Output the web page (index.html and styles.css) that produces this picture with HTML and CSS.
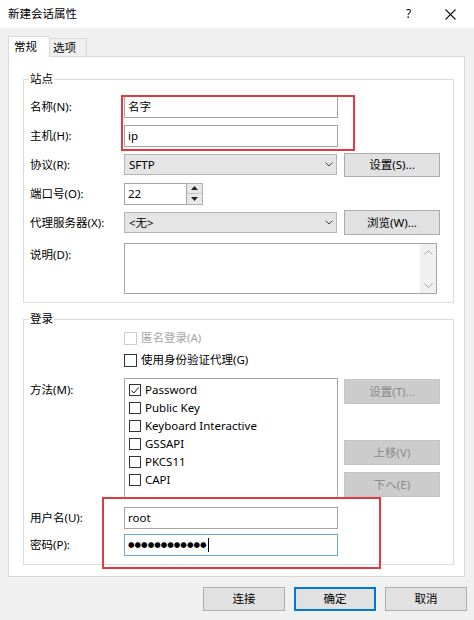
FILE: index.html
```html
<!DOCTYPE html>
<html lang="zh-CN">
<head>
<meta charset="utf-8">
<title>新建会话属性</title>
<link rel="stylesheet" href="styles.css">
</head>
<body>
<div class="window">
  <div class="titlebar">
    <span class="title">新建会话属性</span>
    <span class="help">?</span>
    <svg class="close" width="11" height="11" viewBox="0 0 11 11"><path d="M0.5 0.5 L10.5 10.5 M10.5 0.5 L0.5 10.5" stroke="#111" stroke-width="1.1" fill="none"/></svg>
  </div>

  <div class="tabs">
    <div class="tab active">常规</div>
    <div class="tab">选项</div>
  </div>

  <div class="panel">
    <div class="group site">
      <span class="legend">站点</span>
      <div class="row">
        <span class="label">名称(N):</span>
        <div class="input w-full">名字</div>
      </div>
      <div class="row">
        <span class="label">主机(H):</span>
        <div class="input w-full">ip</div>
      </div>
      <div class="row">
        <span class="label">协议(R):</span>
        <div class="select"><span>SFTP</span><svg width="8" height="5" viewBox="0 0 8 5"><path d="M0.5 0.5 L4 4 L7.5 0.5" stroke="#444" fill="none"/></svg></div>
        <div class="btn side">设置(S)...</div>
      </div>
      <div class="row">
        <span class="label">端口号(O):</span>
        <div class="spin">
          <div class="input w-port">22</div>
          <div class="spin-btns">
            <div class="spin-half"><svg width="7" height="4" viewBox="0 0 7 4"><path d="M0 4 L3.5 0 L7 4 Z" fill="#222"/></svg></div>
            <div class="spin-half"><svg width="7" height="4" viewBox="0 0 7 4"><path d="M0 0 L3.5 4 L7 0 Z" fill="#222"/></svg></div>
          </div>
        </div>
      </div>
      <div class="row">
        <span class="label">代理服务器(X):</span>
        <div class="select"><span>&lt;无&gt;</span><svg width="8" height="5" viewBox="0 0 8 5"><path d="M0.5 0.5 L4 4 L7.5 0.5" stroke="#444" fill="none"/></svg></div>
        <div class="btn side tall">浏览(W)...</div>
      </div>
      <div class="row-area">
        <span class="label top">说明(D):</span>
        <div class="textarea">
          <div class="vscroll">
            <svg width="9" height="5" viewBox="0 0 9 5"><path d="M0.5 4.5 L4.5 0.5 L8.5 4.5" stroke="#a8a8a8" fill="none"/></svg>
            <svg width="9" height="5" viewBox="0 0 9 5"><path d="M0.5 0.5 L4.5 4.5 L8.5 0.5" stroke="#a8a8a8" fill="none"/></svg>
          </div>
        </div>
      </div>
    </div>

    <div class="group login">
      <span class="legend">登录</span>
      <div class="check-row disabled"><span class="cb"></span><span>匿名登录(A)</span></div>
      <div class="check-row"><span class="cb"></span><span>使用身份验证代理(G)</span></div>
      <div class="method-row">
        <span class="label top">方法(M):</span>
        <div class="listbox">
          <div class="item"><span class="cb small"><svg width="11" height="11" viewBox="0 0 11 11"><path d="M1.5 5.5 L4.2 8.3 L9.5 2.2" stroke="#111" stroke-width="1.1" fill="none"/></svg></span>Password</div>
          <div class="item"><span class="cb small"></span>Public Key</div>
          <div class="item"><span class="cb small"></span>Keyboard Interactive</div>
          <div class="item"><span class="cb small"></span>GSSAPI</div>
          <div class="item"><span class="cb small"></span>PKCS11</div>
          <div class="item"><span class="cb small"></span>CAPI</div>
        </div>
        <div class="side-col">
          <div class="btn side dis">设置(T)...</div>
          <div class="btn side dis up">上移(V)</div>
          <div class="btn side dis down">下へ(E)</div>
        </div>
      </div>
      <div class="row cred first">
        <span class="label">用户名(U):</span>
        <div class="input w-full">root</div>
      </div>
      <div class="row cred second">
        <span class="label">密码(P):</span>
        <div class="input w-full focus"><span class="dots">●●●●●●●●●●●●</span><span class="caret"></span></div>
      </div>
    </div>
  </div>

  <div class="footer">
    <div class="btn foot">连接</div>
    <div class="btn foot default">确定</div>
    <div class="btn foot">取消</div>
  </div>
</div>
<div class="mark mark-host"></div>
<div class="mark mark-cred"></div>
</body>
</html>
```

FILE: styles.css
```css
html, body {
  margin: 0;
  padding: 0;
}
body {
  width: 474px;
  height: 620px;
  background: #f0f0f0;
  font-family: "Noto Sans", "Noto Sans CJK SC", sans-serif;
  font-size: 11.5px;
  line-height: 16px;
  color: #000;
  position: relative;
  overflow: hidden;
}
.window {
  display: flex;
  flex-direction: column;
}
.titlebar {
  height: 28px;
  background: #fff;
  display: flex;
  align-items: center;
  padding-left: 8px;
}
.title {
  flex: 1;
  font-size: 11.5px;
}
.help {
  width: 7px;
  margin-right: 32px;
  font-size: 12px;
}
.close {
  margin-right: 18px;
}
.tabs {
  display: flex;
  align-items: flex-start;
  margin: 8px 0 0 8px;
  position: relative;
  z-index: 2;
}
.tab {
  box-sizing: border-box;
  border: 1px solid #d9d9d9;
  border-bottom: none;
  padding-left: 5px;
}
.tab.active {
  width: 42px;
  height: 21px;
  background: #fff;
  padding-top: 2px;
}
.tab:not(.active) {
  width: 37px;
  height: 18px;
  margin-top: 2px;
  border-left: none;
  padding-left: 3px;
  padding-top: 1px;
  background: #f0f0f0;
}
.panel {
  box-sizing: border-box;
  margin: -1px 9px 0 8px;
  height: 521px;
  background: #fff;
  border: 1px solid #d9d9d9;
  padding: 22px 10px 0 14px;
}
.group {
  position: relative;
  border: 1px solid #dcdcdc;
  padding-left: 6px;
}
.legend {
  position: absolute;
  top: -9px;
  left: 5px;
  background: #fff;
  padding: 0 1px;
}
.site {
  height: 224px;
  box-sizing: border-box;
  padding-top: 12px;
}
.login {
  margin-top: 16px;
  height: 246px;
  box-sizing: border-box;
  padding-top: 7px;
}
.row {
  display: flex;
  align-items: center;
  height: 29px;
}
.label {
  width: 94px;
  flex: none;
  white-space: nowrap;
}
.label.top {
  align-self: flex-start;
  padding-top: 4px;
}
.input {
  box-sizing: border-box;
  height: 22px;
  border: 1px solid #a5a5a5;
  background: #fff;
  padding: 0 3px;
  line-height: 20px;
  display: flex;
  align-items: center;
}
.w-full { width: 214px; }
.w-port { width: 63px; }
.input.focus {
  border-color: #6aa8dc;
}
.select {
  box-sizing: border-box;
  width: 213px;
  height: 21px;
  background: #e5e5e5;
  border: 1px solid #b5b5b5;
  display: flex;
  align-items: center;
  justify-content: space-between;
  padding: 0 3px 0 4px;
}
.btn {
  box-sizing: border-box;
  background: #e1e1e1;
  border: 1px solid #adadad;
  display: flex;
  align-items: center;
  justify-content: center;
}
.btn.side {
  width: 96px;
  height: 24px;
  margin-left: 7px;
}
.btn.side.tall { height: 25px; }
.btn.dis {
  background: #cccccc;
  border-color: #c4c4c4;
  color: #8a8a8a;
  height: 25px;
  margin-left: 0;
}
.spin { display: flex; }
.spin-btns {
  box-sizing: border-box;
  width: 16px;
  height: 22px;
  border: 1px solid #b0b0b0;
  border-left: none;
  display: flex;
  flex-direction: column;
  background: #e8e8e8;
}
.spin-half {
  flex: 1;
  display: flex;
  align-items: center;
  justify-content: center;
}
.spin-half:first-child { border-bottom: 1px solid #c8c8c8; }
.row-area {
  display: flex;
  margin-top: 6px;
}
.textarea {
  box-sizing: border-box;
  width: 313px;
  height: 51px;
  border: 1px solid #a5a5a5;
  display: flex;
  justify-content: flex-end;
}
.vscroll {
  width: 16px;
  background: #f0f0f0;
  display: flex;
  flex-direction: column;
  align-items: center;
  justify-content: space-between;
  padding: 6px 0 5px;
  box-sizing: border-box;
}
.check-row {
  display: flex;
  align-items: center;
  height: 22px;
  margin-left: 94px;
  gap: 4px;
}
.cb {
  box-sizing: border-box;
  width: 13px;
  height: 13px;
  border: 1px solid #333;
  background: #fff;
  flex: none;
  display: flex;
  align-items: center;
  justify-content: center;
}
.check-row.disabled { color: #a6a6a6; }
.check-row.disabled .cb { border-color: #cccccc; }
.method-row {
  display: flex;
  margin-top: 7px;
}
.listbox {
  box-sizing: border-box;
  width: 214px;
  height: 121px;
  border: 1px solid #a5a5a5;
  padding: 2px 0 0 4px;
}
.item {
  height: 18px;
  display: flex;
  align-items: center;
  gap: 4px;
}
.cb.small { width: 12px; height: 12px; }
.side-col {
  margin-left: 6px;
  padding-top: 1px;
  display: flex;
  flex-direction: column;
}
.up { margin-top: 36px; }
.down { margin-top: 7px; }
.row.cred { height: 22px; }
.row.cred.first { margin-top: 8px; }
.row.cred.second { margin-top: 5px; }
.dots {
  font-family: "DejaVu Sans", sans-serif;
  font-size: 7.5px;
  letter-spacing: 0;
  color: #000;
}
.caret {
  display: inline-block;
  width: 1px;
  height: 14px;
  background: #000;
  margin-left: 1px;
}
.footer {
  display: flex;
  justify-content: flex-end;
  gap: 9px;
  margin: 10px 7px 0 0;
}
.btn.foot {
  width: 82px;
  height: 24px;
}
.btn.default {
  border-color: #0078d7;
  box-shadow: inset 0 0 0 1px #0078d7;
}
.mark {
  position: absolute;
  box-sizing: border-box;
  border: 2px solid #e23a41;
}
.mark-host {
  left: 121px;
  top: 95px;
  width: 234px;
  height: 56px;
}
.mark-cred {
  left: 102px;
  top: 497px;
  width: 279px;
  height: 72px;
}
```
